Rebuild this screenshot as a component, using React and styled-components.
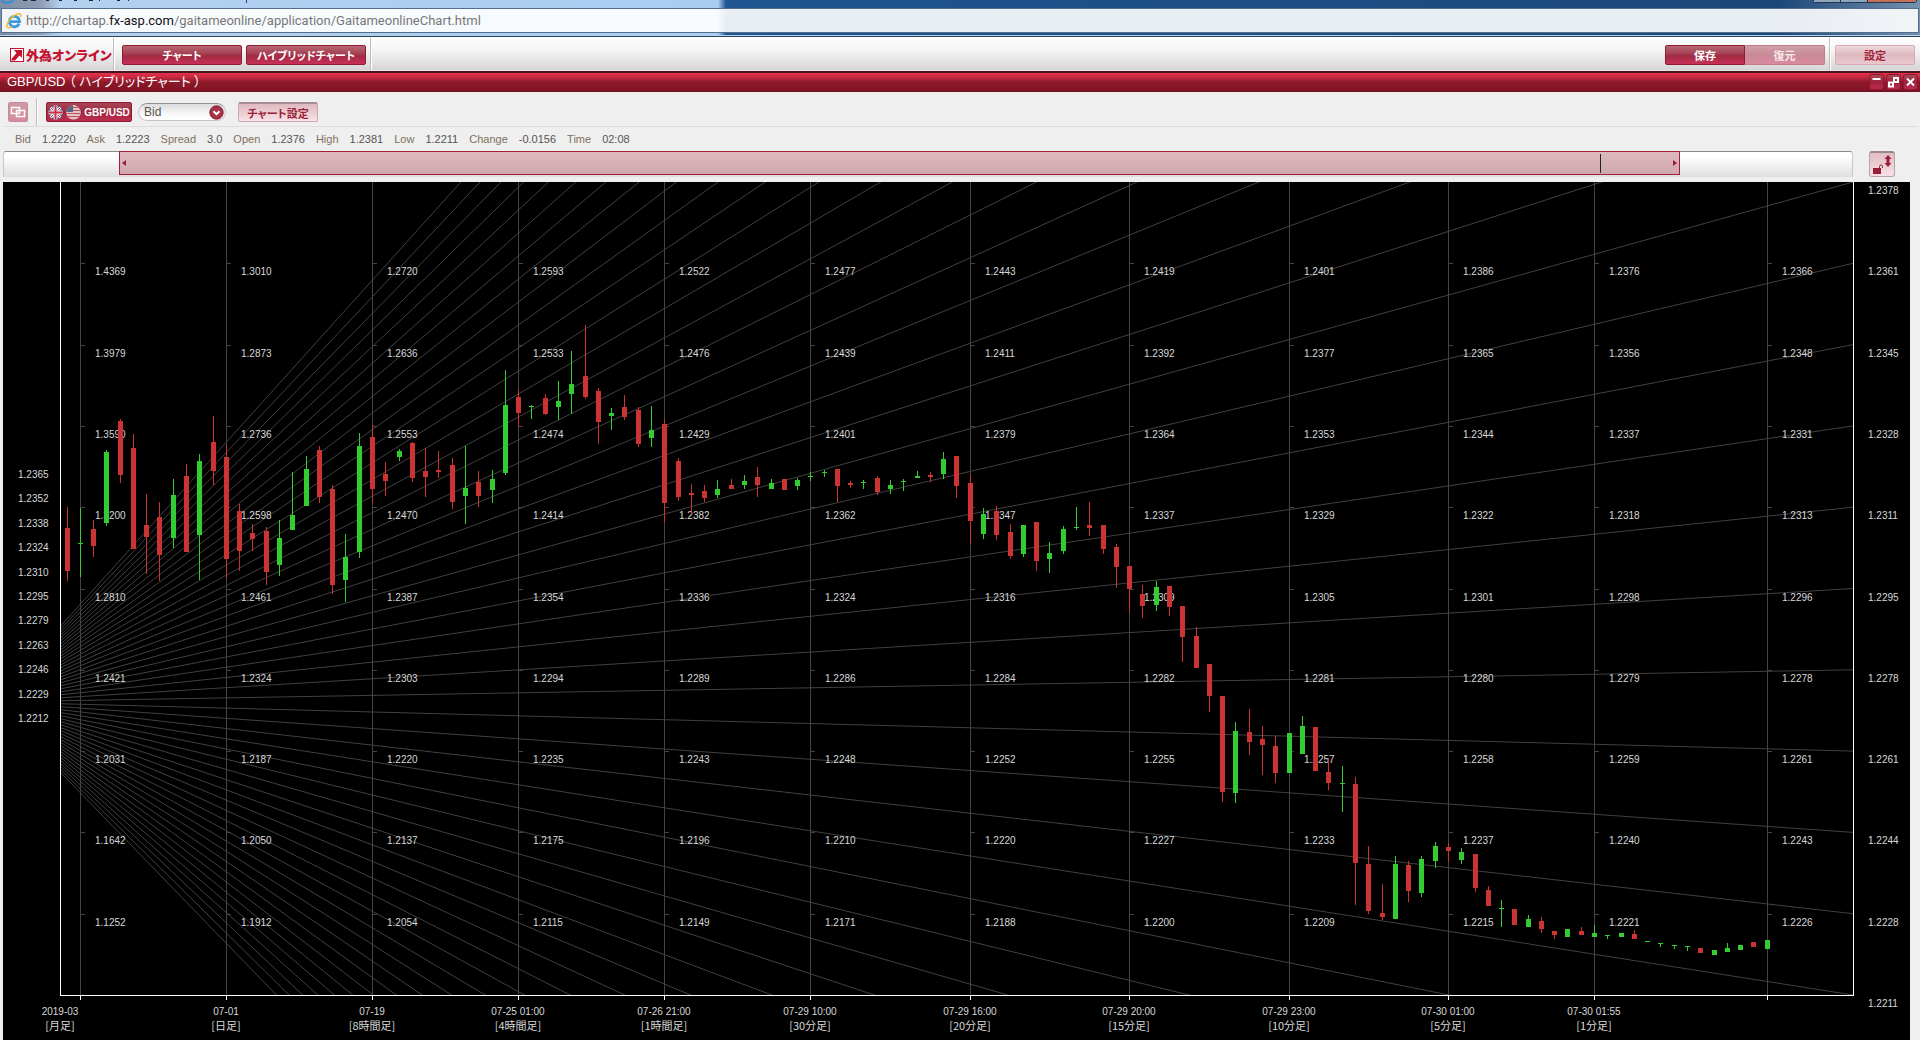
import React from 'react';
import styled, { createGlobalStyle, css } from 'styled-components';

const LATIN = '"Liberation Sans", "Noto Sans CJK JP", sans-serif';
const JAPANESE = '"Noto Sans CJK JP", "Liberation Sans", sans-serif';

const quotes = [
  ['Bid', '1.2220'],
  ['Ask', '1.2223'],
  ['Spread', '3.0'],
  ['Open', '1.2376'],
  ['High', '1.2381'],
  ['Low', '1.2211'],
  ['Change', '-0.0156'],
  ['Time', '02:08'],
];

// plot geometry, in chart units
const CHART_W = 1907;
const CHART_H = 858;
const PLOT = { left: 57, right: 1850, bottom: 813 };
const ROW = PLOT.bottom / 10;

const timeAxis = [
  { tick: 77, label: 57, date: '2019-03', frame: '[月足]', prices: ['1.4369', '1.3979', '1.3590', '1.3200', '1.2810', '1.2421', '1.2031', '1.1642', '1.1252'] },
  { tick: 223, label: 223, date: '07-01', frame: '[日足]', prices: ['1.3010', '1.2873', '1.2736', '1.2598', '1.2461', '1.2324', '1.2187', '1.2050', '1.1912'] },
  { tick: 369, label: 369, date: '07-19', frame: '[8時間足]', prices: ['1.2720', '1.2636', '1.2553', '1.2470', '1.2387', '1.2303', '1.2220', '1.2137', '1.2054'] },
  { tick: 515, label: 515, date: '07-25 01:00', frame: '[4時間足]', prices: ['1.2593', '1.2533', '1.2474', '1.2414', '1.2354', '1.2294', '1.2235', '1.2175', '1.2115'] },
  { tick: 661, label: 661, date: '07-26 21:00', frame: '[1時間足]', prices: ['1.2522', '1.2476', '1.2429', '1.2382', '1.2336', '1.2289', '1.2243', '1.2196', '1.2149'] },
  { tick: 807, label: 807, date: '07-29 10:00', frame: '[30分足]', prices: ['1.2477', '1.2439', '1.2401', '1.2362', '1.2324', '1.2286', '1.2248', '1.2210', '1.2171'] },
  { tick: 967, label: 967, date: '07-29 16:00', frame: '[20分足]', prices: ['1.2443', '1.2411', '1.2379', '1.2347', '1.2316', '1.2284', '1.2252', '1.2220', '1.2188'] },
  { tick: 1126, label: 1126, date: '07-29 20:00', frame: '[15分足]', prices: ['1.2419', '1.2392', '1.2364', '1.2337', '1.2309', '1.2282', '1.2255', '1.2227', '1.2200'] },
  { tick: 1286, label: 1286, date: '07-29 23:00', frame: '[10分足]', prices: ['1.2401', '1.2377', '1.2353', '1.2329', '1.2305', '1.2281', '1.2257', '1.2233', '1.2209'] },
  { tick: 1445, label: 1445, date: '07-30 01:00', frame: '[5分足]', prices: ['1.2386', '1.2365', '1.2344', '1.2322', '1.2301', '1.2280', '1.2258', '1.2237', '1.2215'] },
  { tick: 1591, label: 1591, date: '07-30 01:55', frame: '[1分足]', prices: ['1.2376', '1.2356', '1.2337', '1.2318', '1.2298', '1.2279', '1.2259', '1.2240', '1.2221'] },
  { tick: 1764, prices: ['1.2366', '1.2348', '1.2331', '1.2313', '1.2296', '1.2278', '1.2261', '1.2243', '1.2226'] },
];

const leftPrices = ['1.2365', '1.2352', '1.2338', '1.2324', '1.2310', '1.2295', '1.2279', '1.2263', '1.2246', '1.2229', '1.2212'];
const rightPrices = ['1.2378', '1.2361', '1.2345', '1.2328', '1.2311', '1.2295', '1.2278', '1.2261', '1.2244', '1.2228', '1.2211'];

const UP = '#33cc33';
const DOWN = '#cc3333';

// colour, high, body top, body bottom, low
const candles = `
r 325 346 389 399|g 326 361 362 395|r 338 347 364 375|g 268 270 341 344|r 237 239 293 301
r 252 266 367 367|r 312 343 355 392|r 320 335 373 399|g 297 313 356 366|r 282 294 370 370
g 272 279 353 398|r 234 260 289 303|r 263 275 377 396|r 322 329 369 389|r 342 351 357 369
r 345 349 390 403|g 338 356 383 394|g 290 333 348 348|g 274 287 324 324|r 264 268 315 321
r 303 307 403 412|g 352 375 398 420|g 251 264 370 376|r 243 255 307 321|r 280 292 299 314
g 267 269 275 279|r 260 261 296 300|r 266 289 295 315|r 269 288 290 296|r 276 283 320 327
g 264 306 314 342|r 289 300 314 325|g 288 297 308 321|g 188 223 291 293|r 207 215 231 245
g 223 224 225 237|r 212 216 232 233|g 199 219 225 238|g 169 202 212 232|r 143 194 215 217
r 206 209 240 262|g 226 231 234 248|r 213 225 235 238|r 225 228 262 265|g 224 248 256 265
r 237 242 321 340|r 276 279 315 319|r 302 311 313 332|r 303 309 316 320|g 298 307 313 316
r 297 303 307 307|g 293 299 303 307|r 285 295 303 315|g 297 301 307 307|r 297 297 308 308
g 296 298 304 308|g 290 294 295 299|g 288 290 291 295|r 287 287 304 320|r 299 301 303 306
g 298 300 301 307|r 294 296 310 313|g 298 303 307 312|g 297 299 300 309|g 289 294 296 296
r 290 293 295 300|g 270 277 292 297|r 274 274 304 316|r 293 301 339 362|g 326 332 352 357
r 324 329 353 358|r 342 350 374 377|g 343 343 372 375|r 340 340 379 389|g 360 371 377 391
g 344 347 369 372|g 325 345 346 348|r 320 343 346 354|r 343 343 367 372|r 362 365 385 406
r 384 384 407 431|r 403 412 424 436|g 399 405 423 429|r 404 404 425 434|r 424 424 455 480
r 445 454 486 486|r 482 482 514 530|r 514 514 610 620|g 540 549 611 621|r 527 550 560 573
r 544 557 563 593|r 554 564 591 601|g 551 551 591 591|g 534 544 572 572|r 545 545 589 589
r 576 590 601 608|g 584 601 602 630|r 595 602 681 723|r 664 682 729 732|r 702 731 735 738
g 674 682 737 737|r 679 683 709 720|g 674 677 711 715|g 660 664 679 686|r 661 665 669 680
g 666 670 678 682|r 672 672 706 710|r 704 708 724 724|g 718 726 727 745|r 727 727 743 743
g 733 737 745 745|r 735 739 747 751|r 749 749 753 757|g 747 747 755 755|r 745 749 753 753
g 743 751 755 755|g 753 753 754 757|g 751 751 755 755|r 748 752 757 757|g 759 759 760 760
g 761 761 762 765|g 763 763 764 767|g 764 764 765 769|r 766 766 771 771|g 768 768 773 773
g 761 766 770 770|g 763 763 768 768|r 760 760 765 765|g 758 758 767 767`
  .trim()
  .split(/[|\n]/)
  .map((item, i) => {
    const [color, high, top, bottom, low] = item.split(' ');
    return {
      x: Math.floor(77.3 + (i - 1) * 13.283),
      color: color === 'g' ? UP : DOWN,
      high: +high,
      top: +top,
      bottom: +bottom,
      low: +low,
    };
  });

const fan = Array.from({ length: 50 }, (_, i) => i - 19);

const Chart = () => (
  <ChartSvg viewBox={`0 0 ${CHART_W} ${CHART_H}`} role="img" aria-label="GBP/USD">
    <defs>
      <clipPath id="plot">
        <rect x={PLOT.left} y="0" width={PLOT.right - PLOT.left} height={PLOT.bottom} />
      </clipPath>
    </defs>
    <g clipPath="url(#plot)" stroke="#414141">
      {fan.map(k => (
        <line key={k} x1={PLOT.left} y1={501 + k * 2.96} x2={PLOT.right} y2={k * ROW} />
      ))}
    </g>
    <g fill="#444" shapeRendering="crispEdges">
      {timeAxis.map(({ tick, prices }) => (
        <g key={tick}>
          <rect x={tick} y="0" width="1" height={PLOT.bottom} />
          {prices.map((price, i) => (
            <rect key={price} x={tick} y={Math.round((i + 1) * ROW)} width="5" height="1" />
          ))}
        </g>
      ))}
    </g>
    <g fill="#d8d8d8">
      {timeAxis.map(({ tick, prices }) =>
        prices.map((price, i) => (
          <text key={tick + price} x={tick + 15} y={Math.round((i + 1) * ROW) + 12}>
            {price}
          </text>
        ))
      )}
      {leftPrices.map((price, i) => (
        <text key={price} x="15" y={Math.round(296 + i * 24.4)}>{price}</text>
      ))}
      {rightPrices.map((price, i) => (
        <text key={price} x="1865" y={Math.round(i * ROW) + 12}>{price}</text>
      ))}
      {timeAxis.filter(t => t.date).map(({ label, date, frame }) => (
        <g key={date} textAnchor="middle">
          <text x={label} y="833">{date}</text>
          <FrameLabel x={label} y="848">{frame}</FrameLabel>
        </g>
      ))}
    </g>
    <g shapeRendering="crispEdges">
      {candles.map(c => (
        <g key={c.x} fill={c.color}>
          <rect x={c.x} y={c.high} width="1" height={c.low - c.high} />
          <rect x={c.x - 2} y={c.top} width="5" height={c.bottom - c.top} />
        </g>
      ))}
    </g>
    <g fill="#fff" shapeRendering="crispEdges">
      <rect x={PLOT.left} y="0" width="1" height={PLOT.bottom + 1} />
      <rect x={PLOT.right} y="0" width="1" height={PLOT.bottom + 1} />
      <rect x={PLOT.left} y={PLOT.bottom} width={PLOT.right - PLOT.left + 1} height="1" />
      {timeAxis.map(({ tick }) => (
        <rect key={tick} x={tick} y={PLOT.bottom} width="1" height="5" />
      ))}
    </g>
  </ChartSvg>
);

const BrowserIcon = () => (
  <svg width="16" height="16" viewBox="0 0 16 16" aria-hidden="true">
    <path d="M13.2 10.6A5.2 5.2 0 1 1 13.6 8.6H4.6" fill="none" stroke="#3b9ae0" strokeWidth="2.8" />
    <path d="M1.4 14.6C-1 12 5 3 11 1.2c3.4-1 4.4.4 3.4 2.8" fill="none" stroke="#f0bc2e" strokeWidth="1.5" />
    <path d="M1.4 14.6c1.2.8 3 0 4.6-1" fill="none" stroke="#f0bc2e" strokeWidth="1.4" />
  </svg>
);

const LogoMark = () => (
  <svg width="14" height="14" viewBox="0 0 14 14" aria-hidden="true">
    <rect x="0.5" y="0.5" width="13" height="13" fill="#fff" stroke="#c4122f" />
    <path d="M4 2h8v8L9.6 7.6 5 12.5H1.5V11L6.500 5z" fill="#c4122f" />
  </svg>
);

const CascadeIcon = () => (
  <svg width="16" height="14" viewBox="0 0 16 14" fill="none" stroke="#fff" strokeWidth="1.5" aria-hidden="true">
    <rect x="1.5" y="2.5" width="8" height="6" />
    <path d="M9.5 5.5h5v6h-8v-3" />
    <path d="M6.5 8.500v-3h3" />
  </svg>
);

const BritishFlag = () => (
  <svg width="15" height="15" viewBox="0 0 15 15" aria-hidden="true">
    <clipPath id="gb"><circle cx="7.5" cy="7.5" r="7.2" /></clipPath>
    <g clipPath="url(#gb)">
      <rect width="15" height="15" fill="#3d568f" />
      <path d="M0 0l15 15M15 0L0 15" stroke="#f2eaea" strokeWidth="3" />
      <path d="M0 0l15 15M15 0L0 15" stroke="#c8324a" strokeWidth="1" />
      <path d="M7.5 0v15M0 7.5h15" stroke="#f2eaea" strokeWidth="4" />
      <path d="M7.5 0v15M0 7.5h15" stroke="#c8324a" strokeWidth="2" />
    </g>
  </svg>
);

const AmericanFlag = () => (
  <svg width="15" height="15" viewBox="0 0 15 15" aria-hidden="true">
    <clipPath id="us"><circle cx="7.5" cy="7.5" r="7.2" /></clipPath>
    <g clipPath="url(#us)">
      <rect width="15" height="15" fill="#f0e9e6" />
      <path d="M0 2.5h15M0 5.5h15M0 8.5h15M0 11.5h15M0 14.5h15" stroke="#bd5560" strokeWidth="1.4" />
      <rect width="7" height="7" fill="#5a6482" />
    </g>
  </svg>
);

const ChevronBadge = () => (
  <svg width="15" height="15" viewBox="0 0 15 15" aria-hidden="true">
    <circle cx="7.5" cy="7.5" r="6.7" fill="#a83449" stroke="#8c1c33" />
    <path d="M4.5 6.2l3 3 3-3" fill="none" stroke="#fff" strokeWidth="2" />
  </svg>
);

const LockScaleIcon = () => (
  <svg width="22" height="22" viewBox="0 0 22 22" aria-hidden="true">
    <g fill="#9c1f38">
      <rect x="2" y="14" width="8" height="6" />
      <path d="M17 1l3.5 4h-2v4h2L17 13l-3.5-4h2V5h-2z" />
    </g>
    <path d="M8.5 14v-1.5a1.5 1.5 0 0 1 3 0V14" fill="none" stroke="#9c1f38" />
  </svg>
);

const App = () => (
  <>
    <GlobalStyle />
    <Browser>
      <TitleStrip>
        <TabSliver width="250" height="4" viewBox="0 0 250 4" aria-hidden="true">
          <path d="M1 0c2 4 9 4 12-1" fill="none" stroke="#2f8fd4" strokeWidth="2" />
          <path d="M22 0h4M30 0h5M45 0h3M58 0h3M73 0h3M88 0h4M98 0h1M116 0h3M127 0h1" stroke="#1b2430" strokeWidth="2" />
          <path d="M245.500 0v3" stroke="#3a3a9a" />
        </TabSliver>
        <WindowButtons aria-hidden="true"><i /><i /><i /></WindowButtons>
      </TitleStrip>
      <AddressBar>
        <BrowserIcon />
        <span>http://chartap.<b>fx-asp.com</b>/gaitameonline/application/GaitameonlineChart.html</span>
      </AddressBar>
    </Browser>

    <Toolbar>
      <Logo href="#"><LogoMark />外為オンライン</Logo>
      <Divider />
      <Button>チャート</Button>
      <Button>ハイブリッドチャート</Button>
      <Divider />
      <Spacer />
      <ButtonPair>
        <Button $narrow>保存</Button>
        <Button $narrow $tone="muted">復元</Button>
      </ButtonPair>
      <Divider />
      <Button $narrow $tone="light">設定</Button>
    </Toolbar>

    <TitleBar>
      <h1>GBP/USD （ ハイブリッドチャート ）</h1>
      <WindowButton aria-label="最小化">
        <svg width="13" height="14" viewBox="0 0 13 14"><path d="M2.5 4h8" stroke="#fff" strokeWidth="2" /></svg>
      </WindowButton>
      <WindowButton aria-label="元に戻す">
        <svg width="13" height="14" viewBox="0 0 13 14" fill="none" stroke="#fff" strokeWidth="2">
          <path d="M7 3h4v4H7zM2 7.5h4v4H2z" />
        </svg>
      </WindowButton>
      <WindowButton aria-label="閉じる">
        <svg width="13" height="14" viewBox="0 0 13 14"><path d="M3 3.5l7 7M10 3.500l-7 7" stroke="#fff" strokeWidth="2" /></svg>
      </WindowButton>
    </TitleBar>

    <Panel>
      <ControlRow>
        <IconButton aria-label="ウィンドウ"><CascadeIcon /></IconButton>
        <Divider />
        <PairButton><BritishFlag /><AmericanFlag />GBP/USD</PairButton>
        <SelectWrap>
          <select aria-label="価格" defaultValue="Bid">
            <option>Bid</option>
            <option>Ask</option>
          </select>
          <ChevronBadge />
        </SelectWrap>
        <SettingButton>チャート設定</SettingButton>
      </ControlRow>

      <QuoteRow>
        {quotes.map(([name, value]) => (
          <Quote key={name}>
            <dt>{name}</dt>
            <dd>{value}</dd>
          </Quote>
        ))}
      </QuoteRow>

      <RangeRow>
        <Track>
          <TrackGap $share={115} />
          <Selection>
            <Handle aria-label="開始"><svg width="4" height="6"><path d="M4 0v6L0 3z" /></svg></Handle>
            <Cursor />
            <Handle aria-label="終了"><svg width="4" height="6"><path d="M0 0v6L4 3z" /></svg></Handle>
          </Selection>
          <TrackGap $share={173} />
        </Track>
        <LockButton aria-label="スケール固定"><LockScaleIcon /></LockButton>
      </RangeRow>

      <Chart />
    </Panel>
  </>
);

export default App;

const GlobalStyle = createGlobalStyle`
  * {
    box-sizing: border-box;
  }
  body {
    margin: 0;
    background: #efefef;
    font-family: ${LATIN};
    font-size: 11px;
  }
  button, select {
    margin: 0;
    padding: 0;
    font: inherit;
    cursor: pointer;
  }
  svg {
    display: block;
    flex: none;
  }
`;

const Browser = styled.header`
  display: flex;
  flex-direction: column;
  height: 37px;
  padding-bottom: 3px;
  background: linear-gradient(90deg, #7d8da3 0, #8c9cb3 40px, #b4d0ee 60px, #a9cdf2 718px, #1f5590 726px, #1b4778 1780px, #7591b0 100%);
  border-bottom: 1px solid #2b4158;
  box-shadow: inset 0 -1px #b5d0ea;
`;

const TitleStrip = styled.div`
  display: flex;
  justify-content: space-between;
  height: 8px;
`;

const TabSliver = styled.svg`
  margin-left: 1px;
`;

const WindowButtons = styled.div`
  display: flex;
  height: 3px;
  margin-right: 3px;
  border: 1px solid #24364c;
  border-top: 0;
  border-radius: 0 0 4px 4px;
  i {
    width: 27px;
    background: #8ea5be;
    border-right: 1px solid #24364c;
  }
  i:last-child {
    width: 48px;
    background: #c5705a;
    border-right: 0;
  }
`;

const AddressBar = styled.div`
  display: flex;
  align-items: center;
  gap: 4px;
  flex: 1;
  margin: 0 1px;
  padding-left: 4px;
  border: 1px solid #54708f;
  background: rgba(255, 255, 255, 0.9);
  color: #777;
  font-family: Roboto, "Noto Sans", sans-serif;
  font-size: 13px;
  line-height: 20px;
  b {
    color: #111;
    font-weight: normal;
  }
`;

const Divider = styled.span`
  align-self: stretch;
  width: 2px;
  background: linear-gradient(90deg, #bdbdbd 50%, #fff 50%);
`;

const Spacer = styled.span`
  flex: 1;
`;

const Toolbar = styled.nav`
  display: flex;
  align-items: center;
  gap: 4px;
  height: 34px;
  padding: 1px 5px 0 10px;
  background: linear-gradient(#fff 0, #f4f4f4 40%, #d6d6d6 96%, #f2f2f2 100%);
`;

const Logo = styled.a`
  display: flex;
  align-items: center;
  gap: 2px;
  width: 99px;
  color: #c4122f;
  font-family: ${JAPANESE};
  font-size: 13px;
  font-weight: 900;
  font-feature-settings: 'palt';
  line-height: 16px;
  text-decoration: none;
  white-space: nowrap;
  & + span {
    margin-right: 3px;
  }
`;

const tones = {
  solid: css`
    background: linear-gradient(#b86774 0, #a54354 40%, #a12b42 55%, #c9305a 100%);
    border-color: #8e1c33;
    color: #fff;
  `,
  muted: css`
    background: linear-gradient(#cfa0a8 0, #c88995 50%, #d98ba1 100%);
    border-color: #c07f8b;
    color: #f8eaec;
  `,
  light: css`
    background: linear-gradient(#ecd8db 0, #dfb8bf 50%, #ebc8d0 100%);
    border-color: #d9aab3;
    color: #a3233c;
  `,
};

const Button = styled.button`
  width: ${({ $narrow }) => ($narrow ? '80px' : '120px')};
  height: 20px;
  border: 1px solid;
  border-radius: 2px;
  font-family: ${JAPANESE};
  font-size: 11px;
  font-weight: 700;
  font-feature-settings: 'palt';
  line-height: 16px;
  ${({ $tone = 'solid' }) => tones[$tone]}
`;

const ButtonPair = styled.div`
  display: flex;
  button:first-child {
    border-radius: 2px 0 0 2px;
  }
  button:last-child {
    border-left: 0;
    border-radius: 0 2px 2px 0;
  }
`;

const TitleBar = styled.div`
  display: flex;
  align-items: center;
  gap: 2px;
  height: 21px;
  padding: 0 2px 1px 7px;
  border-top: 2px solid #4a1620;
  background: linear-gradient(#e8304c 0, #c92a42 20%, #8b1828 50%, #821526 90%, #6a1020 100%);
  h1 {
    flex: 1;
    margin: 0;
    color: #fff;
    font-size: 13px;
    font-weight: normal;
    font-feature-settings: 'palt';
    line-height: 16px;
  }
`;

const WindowButton = styled.button`
  display: flex;
  align-items: center;
  justify-content: center;
  width: 15px;
  height: 16px;
  border: 1px solid #8e1830;
  border-radius: 3px;
  background: linear-gradient(#a84a58, #a0203a 50%, #c02a50);
`;

const Panel = styled.main`
  padding: 0 10px 0 3px;
  background: #efefef;
`;

const ControlRow = styled.div`
  display: flex;
  align-items: center;
  gap: 8px;
  height: 35px;
  padding: 6px 0 0 5px;
  margin-right: -8px;
  border-bottom: 1px solid #dedede;
`;

const IconButton = styled.button`
  display: flex;
  align-items: center;
  justify-content: center;
  width: 20px;
  height: 20px;
  border: 1px solid #c58a95;
  border-radius: 2px;
  background: linear-gradient(#cd9aa3, #d58c9e);
`;

const PairButton = styled.button`
  display: flex;
  align-items: center;
  justify-content: center;
  gap: 3px;
  width: 86px;
  height: 20px;
  border: 1px solid #8e1c33;
  border-radius: 2px;
  background: linear-gradient(#a94556, #9d2940 50%, #bf2c50);
  color: #fff;
  font-size: 10px;
  font-weight: bold;
`;

const SelectWrap = styled.div`
  display: flex;
  align-items: center;
  width: 88px;
  height: 18px;
  margin-left: -2px;
  padding-right: 1px;
  border: 1px solid #c4c4c4;
  border-top-color: #8f8f8f;
  border-radius: 9px;
  background: linear-gradient(#dcdcdc, #f7f7f7 60%, #fff);
  select {
    flex: 1;
    min-width: 0;
    height: 16px;
    padding-left: 5px;
    border: 0;
    background: none;
    color: #555;
    appearance: none;
    font-size: 12px;
  }
`;

const SettingButton = styled.button`
  width: 80px;
  height: 20px;
  margin-left: 4px;
  border: 1px solid #c9a9af;
  border-top: 2px solid #a88f94;
  border-radius: 2px;
  background: linear-gradient(#dfb9c1, #ecccd3 50%, #f8e3e8);
  color: #9c1f38;
  font-family: ${JAPANESE};
  font-size: 11px;
  font-weight: 700;
  font-feature-settings: 'palt';
  line-height: 16px;
`;

const QuoteRow = styled.dl`
  display: flex;
  align-items: center;
  gap: 11px;
  height: 24px;
  margin: 0;
  padding-left: 12px;
`;

const Quote = styled.div`
  display: flex;
  gap: 11px;
  line-height: 16px;
  dt {
    color: #80705c;
  }
  dd {
    margin: 0;
    color: #555;
  }
`;

const RangeRow = styled.div`
  display: flex;
  align-items: flex-start;
  gap: 16px;
  height: 31px;
  padding-right: 15px;
`;

const Track = styled.div`
  display: flex;
  flex: 1;
  height: 26px;
  border: 1px solid #c8c8c8;
  border-top-color: #8a8a8a;
  border-bottom: 0;
  border-radius: 3px 3px 0 0;
  background: linear-gradient(#fff 20%, #dedede);
`;

const TrackGap = styled.span`
  flex: ${({ $share }) => $share};
`;

const Selection = styled.div`
  position: relative;
  display: flex;
  align-items: center;
  justify-content: space-between;
  flex: 1562;
  height: 24px;
  margin-top: -1px;
  padding: 0 1px;
  border: 1px solid #a02138;
  background: linear-gradient(#dfb9c0, #cfa7af);
`;

const Handle = styled.button`
  width: 6px;
  height: 16px;
  border: 0;
  background: none;
  svg {
    margin: auto;
    fill: #9c1f38;
  }
`;

// current position marker over the selected range
const Cursor = styled.span`
  position: absolute;
  top: 2px;
  bottom: 1px;
  right: 5%;
  width: 1px;
  background: #222;
`;

const LockButton = styled.button`
  display: flex;
  align-items: center;
  justify-content: center;
  width: 26px;
  height: 26px;
  border: 1px solid #b5a5a8;
  border-top: 2px solid #9a888c;
  border-radius: 3px;
  background: linear-gradient(#e2bcc4, #f8e0e6);
`;

const ChartSvg = styled.svg`
  width: 100%;
  height: auto;
  background: #000;
  font-family: ${LATIN};
  font-size: 10px;
`;

const FrameLabel = styled.text`
  font-family: ${JAPANESE};
  font-size: 11px;
`;
